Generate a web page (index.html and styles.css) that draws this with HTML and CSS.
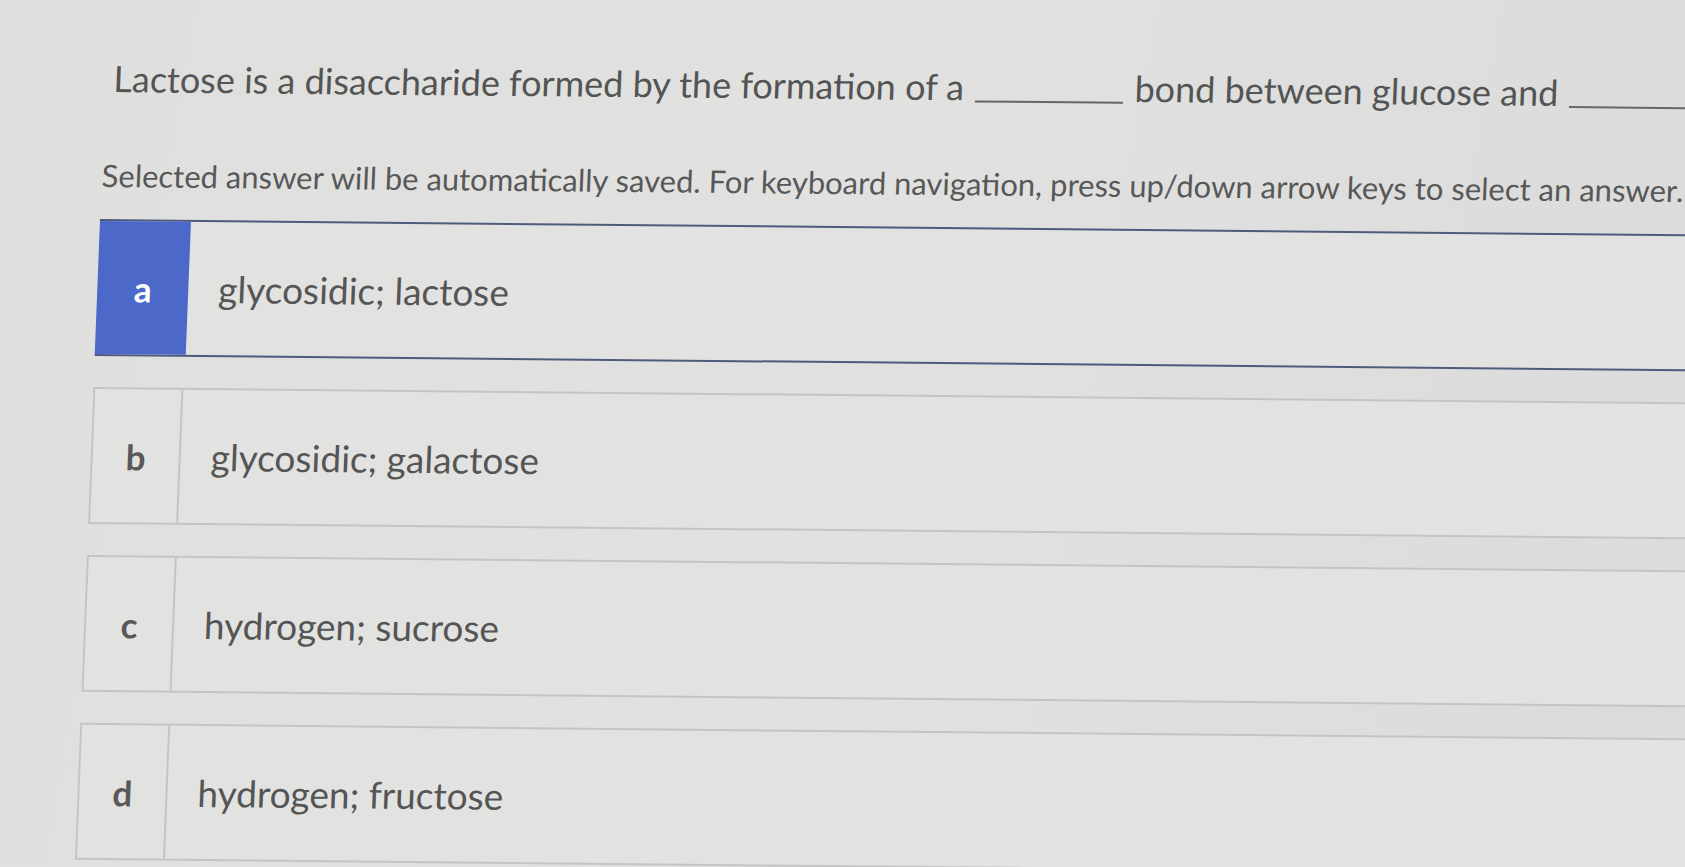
FILE: index.html
```html
<!DOCTYPE html>
<html lang="en">
<head>
    <meta charset="UTF-8">
    <meta name="viewport" content="width=device-width, initial-scale=1.0">
    <title>Question</title>
    <link rel="stylesheet" href="styles.css">
</head>
<body>
    <div class="quiz">
        <p class="question">
            Lactose is a disaccharide formed by the formation of a <span class="blank"></span> bond between glucose and <span class="blank blank-end"></span>
        </p>

        <p class="hint">Selected answer will be automatically saved. For keyboard navigation, press up/down arrow keys to select an answer.</p>

        <div class="options" role="radiogroup">
            <div class="option selected" role="radio" aria-checked="true">
                <span class="letter">a</span>
                <span class="answer">glycosidic; lactose</span>
            </div>
            <div class="option" role="radio" aria-checked="false">
                <span class="letter">b</span>
                <span class="answer">glycosidic; galactose</span>
            </div>
            <div class="option" role="radio" aria-checked="false">
                <span class="letter">c</span>
                <span class="answer">hydrogen; sucrose</span>
            </div>
            <div class="option" role="radio" aria-checked="false">
                <span class="letter">d</span>
                <span class="answer">hydrogen; fructose</span>
            </div>
        </div>
    </div>
</body>
</html>
```

FILE: styles.css
```css
html, body {
    margin: 0;
    padding: 0;
    height: 100%;
    overflow: hidden;
}
body {
    font-family: 'Lato', 'Open Sans', sans-serif;
    background: linear-gradient(100deg, #dfe0de 0%, #e1e2e0 50%, #dadbda 100%);
    color: #555;
}
/* the whole sheet is seen at a slight angle */
.quiz {
    padding-top: 55px;
    transform-origin: 100px 220px;
    transform: rotate(0.55deg) skewX(-1.7deg);
}
.question {
    margin: 0 0 0 108px;
    font-size: 36px;
    line-height: 46px;
    white-space: nowrap;
    color: #545454;
}
.blank {
    display: inline-block;
    width: 148px;
    border-bottom: 2px solid #666;
    margin: 0 2px;
    vertical-align: -2px;
}
.blank-end {
    width: 200px;
}
.hint {
    margin: 54px 0 0 100px;
    font-size: 31px;
    line-height: 40px;
    white-space: nowrap;
    color: #585858;
}
.options {
    margin: 24px 0 0 100px;
    width: 1660px;
    display: flex;
    flex-direction: column;
    gap: 31px;
}
.option {
    display: flex;
    height: 137px;
    box-sizing: border-box;
    border: 2px solid #c4c5c3;
    background-color: #e2e3e1;
}
.letter {
    width: 86px;
    flex-shrink: 0;
    display: flex;
    align-items: center;
    justify-content: center;
    border-right: 2px solid #c4c5c3;
    font-size: 35px;
    font-weight: bold;
    color: #595959;
}
.answer {
    display: flex;
    align-items: center;
    padding-left: 30px;
    font-size: 37px;
    color: #555;
}
.option.selected {
    border: none;
    border-top: 2px solid #4f5b7c;
    border-bottom: 2px solid #4f5b7c;
}
.option.selected .letter {
    width: 91px;
    background-color: #4c68c9;
    border-right: none;
    color: #fff;
}
```
